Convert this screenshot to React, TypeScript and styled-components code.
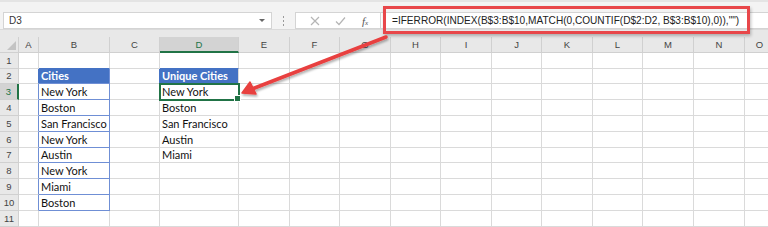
import React from 'react';
import styled, { createGlobalStyle } from 'styled-components';

const GlobalStyle = createGlobalStyle`
  * {
    box-sizing: border-box;
    margin: 0;
    padding: 0;
  }

  body {
    font-family: 'Lato', 'Liberation Sans', sans-serif;
    background-color: #ffffff;
    color: #111;
    overflow: hidden;
  }
`;

const Window = styled.div`
  position: relative;
  width: 768px;
  height: 227px;
  overflow: hidden;
  background: #ffffff;
`;

/* ---------- formula bar ---------- */

const Toolbar = styled.div`
  height: 30px;
  display: flex;
  align-items: flex-start;
  padding: 10px 0 0 3px;
  background: #f3f3f3;
  border-top: 2px solid #e4e4e4;
  border-bottom: 1px solid #dadada;
`;

const NameBox = styled.div`
  width: 269px;
  height: 17px;
  display: flex;
  align-items: center;
  justify-content: space-between;
  padding: 0 6px 0 5px;
  background: #fff;
  border: 1px solid #d4d4d4;
  font-family: 'Liberation Sans', sans-serif;
  font-size: 10px;
  color: #333;
`;

const DropArrow = styled.span`
  width: 0;
  height: 0;
  border-left: 3px solid transparent;
  border-right: 3px solid transparent;
  border-top: 3px solid #666;
`;

const Grip = styled.div`
  width: 23px;
  height: 17px;
  display: flex;
  flex-direction: column;
  align-items: center;
  justify-content: center;
  gap: 2px;

  span {
    width: 1px;
    height: 2px;
    background: #9a9a9a;
  }
`;

const FormulaBox = styled.div`
  flex: 1;
  height: 17px;
  display: flex;
  align-items: center;
  background: #fff;
  border: 1px solid #d4d4d4;
  border-right: none;
`;

const Buttons = styled.div`
  width: 85px;
  height: 100%;
  display: flex;
  align-items: center;
  justify-content: space-around;
  padding: 0 4px 0 6px;
  border-right: 1px solid #d4d4d4;
`;

const Fx = styled.span`
  font-family: 'Liberation Serif', serif;
  font-style: italic;
  font-size: 11px;
  color: #555;

  sub {
    font-size: 7px;
    vertical-align: baseline;
  }
`;

const FormulaText = styled.div`
  padding-left: 11px;
  font-family: 'Liberation Sans', sans-serif;
  font-size: 10.1px;
  color: #222;
  white-space: nowrap;
`;

/* ---------- sheet ---------- */

const Sheet = styled.div`
  background: #e8e8e8;
  padding-top: 7px;
`;

const COLS = ['', 'A', 'B', 'C', 'D', 'E', 'F', 'G', 'H', 'I', 'J', 'K', 'L', 'M', 'N', 'O'];
const WIDTHS = [19, 20, 71, 50, 79, 51, 50, 51, 50, 51, 50, 51, 50, 51, 51, 30];

const Grid = styled.div`
  display: grid;
  grid-template-columns: ${WIDTHS.map((w) => `${w}px`).join(' ')};
  grid-auto-rows: 15.8px;
`;

const ColHeader = styled.div<{ $active?: boolean }>`
  display: flex;
  align-items: center;
  justify-content: center;
  height: 16px;
  font-family: 'Liberation Sans', sans-serif;
  font-size: 9.5px;
  color: ${(p) => (p.$active ? '#217346' : '#444')};
  background: ${(p) => (p.$active ? '#d3d3d3' : '#e8e8e8')};
  border-right: 1px solid #d0d0d0;
  border-bottom: ${(p) => (p.$active ? '2px solid #217346' : '1px solid #d0d0d0')};
`;

const Corner = styled.div`
  height: 16px;
  background: #e8e8e8;
  border-right: 1px solid #d0d0d0;
  border-bottom: 1px solid #d0d0d0;
  position: relative;

  &::after {
    content: '';
    position: absolute;
    right: 2px;
    bottom: 2px;
    border-left: 9px solid transparent;
    border-bottom: 9px solid #c3c3c3;
  }
`;

const RowHeader = styled.div<{ $active?: boolean }>`
  display: flex;
  align-items: center;
  justify-content: center;
  font-family: 'Liberation Sans', sans-serif;
  font-size: 9.5px;
  color: ${(p) => (p.$active ? '#217346' : '#444')};
  background: ${(p) => (p.$active ? '#d3d3d3' : '#e8e8e8')};
  border-bottom: 1px solid #d0d0d0;
  border-right: ${(p) => (p.$active ? '2px solid #217346' : '1px solid #d0d0d0')};
`;

const Cell = styled.div<{ $fill?: boolean; $right?: string; $bottom?: string; $selected?: boolean }>`
  position: relative;
  display: flex;
  align-items: center;
  padding-left: 2px;
  font-size: 11px;
  font-weight: ${(p) => (p.$fill ? 700 : 400)};
  color: ${(p) => (p.$fill ? '#ffffff' : '#111')};
  background: ${(p) => (p.$fill ? '#4472c4' : '#ffffff')};
  border-right: 1px solid ${(p) => p.$right || '#dadada'};
  border-bottom: 1px solid ${(p) => p.$bottom || '#dadada'};
  white-space: nowrap;
  overflow: visible;
  ${(p) =>
    p.$selected &&
    `
    outline: 2px solid #217346;
    outline-offset: -1px;
    z-index: 1;
    &::after {
      content: '';
      position: absolute;
      right: -3px;
      bottom: -3px;
      width: 5px;
      height: 5px;
      background: #217346;
      border: 1px solid #fff;
    }
  `}
`;

/* ---------- annotations ---------- */

const Callout = styled.div`
  position: absolute;
  left: 383px;
  top: 6px;
  width: 367px;
  height: 28px;
  border: 3px solid #e8474a;
  box-shadow: 1px 2px 3px rgba(0, 0, 0, 0.25);
  pointer-events: none;
`;

const ArrowLayer = styled.svg`
  position: absolute;
  left: 0;
  top: 0;
  pointer-events: none;
`;

const blue = '#6f8fd5';

const listB = ['Cities', 'New York', 'Boston', 'San Francisco', 'New York', 'Austin', 'New York', 'Miami', 'Boston'];
const listD = ['Unique Cities', 'New York', 'Boston', 'San Francisco', 'Austin', 'Miami'];

const formula = '=IFERROR(INDEX(B$3:B$10,MATCH(0,COUNTIF(D$2:D2, B$3:B$10),0)),"")';

const XIcon = () => (
  <svg width="10" height="10" viewBox="0 0 10 10">
    <path d="M1 1 L9 9 M9 1 L1 9" stroke="#b5b5b5" strokeWidth="1.2" fill="none" />
  </svg>
);

const CheckIcon = () => (
  <svg width="11" height="10" viewBox="0 0 11 10">
    <path d="M1 5.5 L4 8.5 L10 1.5" stroke="#b5b5b5" strokeWidth="1.2" fill="none" />
  </svg>
);

export default function App() {
  const rows = Array.from({ length: 11 }, (_, i) => i + 1);

  const renderRow = (r: number) => {
    const cells: React.ReactNode[] = [];
    cells.push(
      <RowHeader key="h" $active={r === 3}>
        {r}
      </RowHeader>
    );
    for (let c = 1; c < COLS.length; c++) {
      const col = COLS[c];
      let text = '';
      let fill = false;
      let right: string | undefined;
      let bottom: string | undefined;
      let selected = false;

      if (col === 'A' && r >= 2 && r <= 10) right = r === 2 ? '#4472c4' : blue;
      if (col === 'B') {
        if (r === 1) bottom = '#4472c4';
        if (r >= 2 && r <= 10) {
          text = listB[r - 2];
          fill = r === 2;
          right = blue;
          bottom = blue;
        }
      }
      if (col === 'C' && r === 2) right = '#4472c4';
      if (col === 'D') {
        if (r === 1) bottom = '#4472c4';
        if (r >= 2 && r <= 7) text = listD[r - 2];
        if (r === 2) fill = true;
        selected = r === 3;
      }

      cells.push(
        <Cell key={col} $fill={fill} $right={right} $bottom={bottom} $selected={selected}>
          {text}
        </Cell>
      );
    }
    return cells;
  };

  return (
    <>
      <GlobalStyle />
      <Window>
        <Toolbar>
          <NameBox>
            D3
            <DropArrow />
          </NameBox>
          <Grip>
            <span />
            <span />
            <span />
          </Grip>
          <FormulaBox>
            <Buttons>
              <XIcon />
              <CheckIcon />
              <Fx>
                f<sub>x</sub>
              </Fx>
            </Buttons>
            <FormulaText>{formula}</FormulaText>
          </FormulaBox>
        </Toolbar>

        <Sheet>
          <Grid>
            <Corner />
            {COLS.slice(1).map((c) => (
              <ColHeader key={c} $active={c === 'D'}>
                {c}
              </ColHeader>
            ))}
            {rows.map((r) => renderRow(r))}
          </Grid>
        </Sheet>

        <Callout />
        <ArrowLayer width="768" height="227" viewBox="0 0 768 227">
          <defs>
            <filter id="shadow" x="-10%" y="-10%" width="130%" height="140%">
              <feDropShadow dx="1" dy="2" stdDeviation="1.2" floodColor="#000" floodOpacity="0.3" />
            </filter>
          </defs>
          <g filter="url(#shadow)">
            <line x1="386" y1="37" x2="252" y2="89" stroke="#e8403f" strokeWidth="3.5" strokeLinecap="round" />
            <path d="M242 93 L250 82 L256 94 Z" fill="#e8403f" stroke="#e8403f" strokeWidth="1.5" strokeLinejoin="round" />
          </g>
        </ArrowLayer>
      </Window>
    </>
  );
}
